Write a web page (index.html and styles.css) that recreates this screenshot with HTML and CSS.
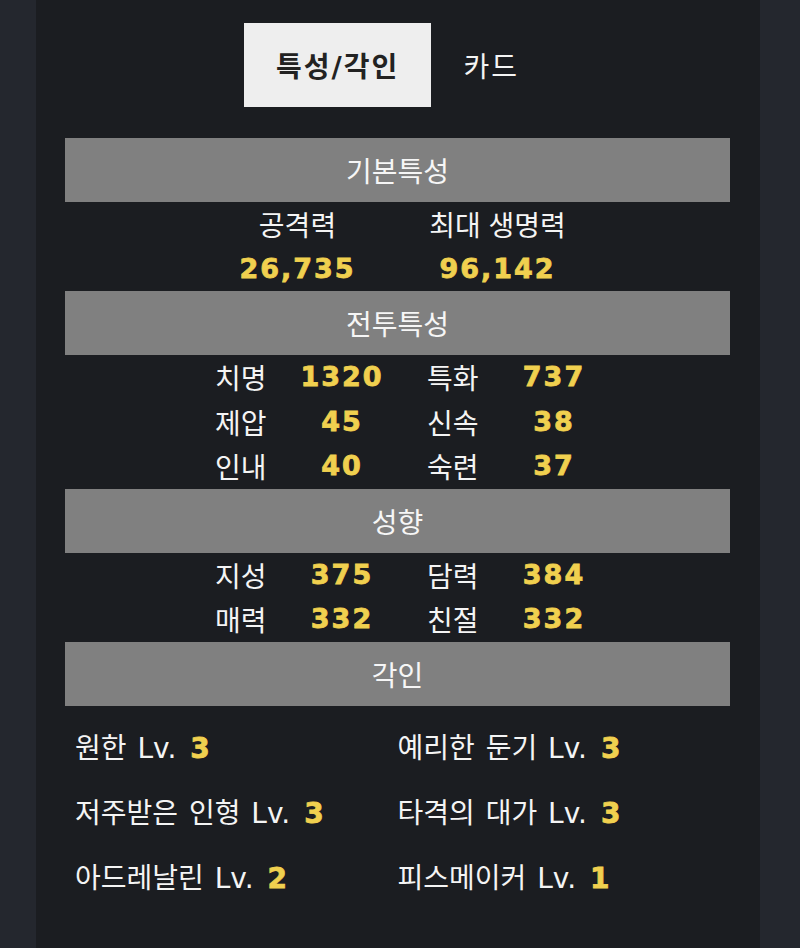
FILE: index.html
```html
<!DOCTYPE html>
<html lang="ko">
<head>
<meta charset="utf-8">
<title>특성/각인</title>
<link rel="stylesheet" href="styles.css">
</head>
<body>
<div class="panel">
  <div class="tabs">
    <div class="tab active">특성/각인</div>
    <div class="tab">카드</div>
  </div>

  <div class="section-head">기본특성</div>
  <div class="basic">
    <div class="basic-item">
      <div class="label">공격력</div>
      <div class="num">26,735</div>
    </div>
    <div class="basic-item">
      <div class="label">최대 생명력</div>
      <div class="num">96,142</div>
    </div>
  </div>

  <div class="section-head">전투특성</div>
  <div class="stats">
    <div class="label">치명</div><div class="num">1320</div>
    <div class="label">특화</div><div class="num">737</div>
    <div class="label">제압</div><div class="num">45</div>
    <div class="label">신속</div><div class="num">38</div>
    <div class="label">인내</div><div class="num">40</div>
    <div class="label">숙련</div><div class="num">37</div>
  </div>

  <div class="section-head">성향</div>
  <div class="stats">
    <div class="label">지성</div><div class="num">375</div>
    <div class="label">담력</div><div class="num">384</div>
    <div class="label">매력</div><div class="num">332</div>
    <div class="label">친절</div><div class="num">332</div>
  </div>

  <div class="section-head">각인</div>
  <div class="engravings">
    <div class="engr">원한 Lv. <span class="lv">3</span></div>
    <div class="engr">예리한 둔기 Lv. <span class="lv">3</span></div>
    <div class="engr">저주받은 인형 Lv. <span class="lv">3</span></div>
    <div class="engr">타격의 대가 Lv. <span class="lv">3</span></div>
    <div class="engr">아드레날린 Lv. <span class="lv">2</span></div>
    <div class="engr">피스메이커 Lv. <span class="lv">1</span></div>
  </div>
</div>
</body>
</html>
```

FILE: styles.css
```css
html, body {
  margin: 0;
  padding: 0;
}

body {
  background: #24272e;
  font-family: "DejaVu Sans", "Noto Sans CJK KR", sans-serif;
  color: #f4f4f4;
  font-size: 28px;
}

.panel {
  box-sizing: border-box;
  margin-left: 36px;
  width: 724px;
  min-height: 948px;
  background: #1b1d21;
  padding: 23px 30px 0 29px;
}

.tabs {
  display: flex;
  justify-content: center;
  margin-bottom: 31px;
}

.tab {
  box-sizing: border-box;
  height: 84px;
  line-height: 84px;
  padding: 3px 32px 0 32px;
  font-size: 28px;
  letter-spacing: 2px;
  color: #f4f4f4;
}

.tab.active {
  background: #eeeeee;
  color: #222222;
  font-weight: 700;
}

.section-head {
  height: 64px;
  line-height: 64px;
  background: #808080;
  color: #f6f6f6;
  text-align: center;
  font-family: "Noto Sans CJK KR", sans-serif;
  font-size: 28px;
}

.label {
  font-family: "Noto Sans CJK KR", sans-serif;
  font-size: 28px;
  line-height: 44.5px;
}

.num {
  font-family: "DejaVu Sans", sans-serif;
  font-weight: 700;
  font-size: 27px;
  line-height: 44.5px;
  color: #f0d04f;
  letter-spacing: 2px;
  -webkit-text-stroke: 0.8px #f0d04f;
}

.basic {
  display: grid;
  grid-template-columns: 200px 200px;
  justify-content: center;
  text-align: center;
}

.stats {
  display: grid;
  grid-template-columns: 62px 150px 62px 150px;
  margin-left: 150px;
}

.stats .num {
  text-align: center;
  padding-right: 20px;
}

.engravings {
  display: grid;
  grid-template-columns: 1fr 1fr;
  padding: 10px 10px 0 10px;
}

.engr {
  height: 65px;
  line-height: 65px;
  font-size: 28px;
  word-spacing: 2px;
  white-space: nowrap;
}

.lv {
  font-weight: 700;
  color: #f0d04f;
  -webkit-text-stroke: 0.8px #f0d04f;
  margin-left: 3px;
}
```
